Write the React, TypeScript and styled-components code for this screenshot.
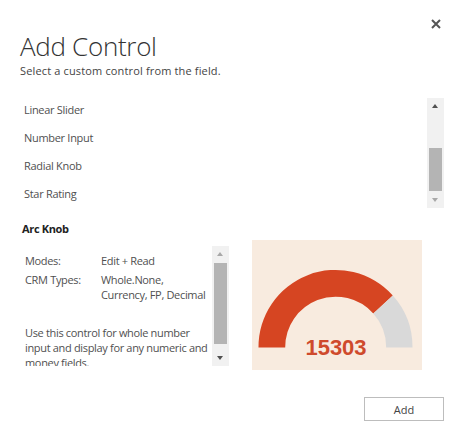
import * as React from 'react';
import styled, { createGlobalStyle } from 'styled-components';

const GlobalStyle = createGlobalStyle`
  html, body {
    margin: 0;
    padding: 0;
    background: #fff;
  }
`;

const Dialog = styled.div`
  width: 455px;
  height: 428px;
  box-sizing: border-box;
  padding: 16px 11px 7px 20px;
  display: flex;
  flex-direction: column;
  overflow: hidden;
  color: #444;
  font-family: 'Open Sans', 'Noto Sans', sans-serif;
  font-size: 11px;
`;

const CloseRow = styled.div`
  display: flex;
  justify-content: flex-end;
  height: 13px;
  padding-right: 2px;
`;

const CloseButton = styled.button`
  width: 12px;
  height: 12px;
  margin-top: 2px;
  padding: 0;
  border: 0;
  background: none;
  color: #555;

  svg {
    display: block;
  }
`;

const Title = styled.h1`
  margin: 0;
  height: 34px;
  font-size: 26px;
  line-height: 34px;
  font-weight: 300;
  letter-spacing: -0.3px;
  color: #333;
`;

const Subtitle = styled.p`
  margin: 0 0 19px;
  height: 16px;
  font-size: 11px;
  line-height: 16px;
  letter-spacing: 0.15px;
  color: #444;
`;

const ListPanel = styled.div`
  display: flex;
  justify-content: space-between;
  height: 110px;
`;

const ControlList = styled.ul`
  list-style: none;
  margin: 0;
  padding: 0 0 0 4px;
`;

const ControlItem = styled.li`
  height: 28px;
  line-height: 24px;
  letter-spacing: -0.3px;
  color: #505050;
`;

const Scrollbar = styled.div<{ $thumbTop: number; $thumbHeight: number }>`
  position: relative;
  width: 17px;
  height: 100%;
  background: #f1f1f1;

  &::after {
    content: '';
    position: absolute;
    left: 2px;
    right: 2px;
    top: ${({ $thumbTop }) => $thumbTop}px;
    height: ${({ $thumbHeight }) => $thumbHeight}px;
    background: #b4b4b4;
  }
`;

const Arrow = styled.span<{ $up?: boolean; $dim?: boolean }>`
  position: absolute;
  left: 5px;
  ${({ $up }) => ($up ? 'top: 6px;' : 'bottom: 6px;')}
  width: 0;
  height: 0;
  border-left: 3.5px solid transparent;
  border-right: 3.5px solid transparent;
  ${({ $up, $dim }) =>
    `${$up ? 'border-bottom' : 'border-top'}: 4px solid ${$dim ? '#a8a8a8' : '#505050'};`}
`;

const SectionTitle = styled.h2`
  margin: 13px 0 0 2px;
  height: 16px;
  font-size: 11px;
  line-height: 16px;
  font-weight: 700;
  letter-spacing: -0.35px;
  color: #222;
`;

const DetailRow = styled.div`
  display: flex;
  margin-top: 9px;
`;

const DetailPanel = styled.div`
  width: 209px;
  height: 120px;
  display: flex;
  justify-content: space-between;
`;

const DetailText = styled.div`
  width: 191px;
  height: 120px;
  padding-left: 5px;
  box-sizing: border-box;
  overflow: hidden;
  line-height: 15px;
  letter-spacing: -0.33px;
  color: #505050;
`;

const InfoGrid = styled.dl`
  display: grid;
  grid-template-columns: 76px 1fr;
  row-gap: 4px;
  margin: 7px 0 0;

  dt,
  dd {
    margin: 0;
    white-space: pre-line;
  }
`;

const Description = styled.p`
  margin: 23px 0 0;
  white-space: nowrap;
`;

const Preview = styled.div`
  width: 170px;
  height: 130px;
  margin: -6px 0 0 23px;
  background: #f8ebdf;

  svg {
    display: block;
  }
`;

const GaugeValue = styled.text`
  font-family: 'Liberation Sans', Arial, sans-serif;
  font-size: 22px;
  font-weight: 700;
  fill: #cf4a2c;
`;

const Footer = styled.div`
  display: flex;
  justify-content: flex-end;
  margin-top: auto;
`;

const AddButton = styled.button`
  width: 80px;
  height: 24px;
  padding: 0;
  background: #fff;
  border: 1px solid #bdbdbd;
  color: #444;
  font-family: inherit;
  font-size: 11px;
`;

const controls = ['Linear Slider', 'Number Input', 'Radial Knob', 'Star Rating'];

const App = () => (
  <>
    <GlobalStyle />
    <Dialog>
      <CloseRow>
        <CloseButton aria-label="Close">
          <svg width="12" height="12" viewBox="0 0 12 12">
            <path d="M2 2l8 8M10 2l-8 8" stroke="currentColor" strokeWidth="2" fill="none" />
          </svg>
        </CloseButton>
      </CloseRow>
      <Title>Add Control</Title>
      <Subtitle>Select a custom control from the field.</Subtitle>
      <ListPanel>
        <ControlList>
          {controls.map((name) => (
            <ControlItem key={name}>{name}</ControlItem>
          ))}
        </ControlList>
        <Scrollbar $thumbTop={50} $thumbHeight={43}>
          <Arrow $up />
          <Arrow $dim />
        </Scrollbar>
      </ListPanel>
      <SectionTitle>Arc Knob</SectionTitle>
      <DetailRow>
        <DetailPanel>
          <DetailText>
            <InfoGrid>
              <dt>Modes:</dt>
              <dd>Edit + Read</dd>
              <dt>CRM Types:</dt>
              <dd>{'Whole.None,\nCurrency, FP, Decimal'}</dd>
            </InfoGrid>
            <Description>
              Use this control for whole number
              <br />
              input and display for any numeric and
              <br />
              money fields.
            </Description>
          </DetailText>
          <Scrollbar $thumbTop={17} $thumbHeight={81}>
            <Arrow $up $dim />
            <Arrow />
          </Scrollbar>
        </DetailPanel>
        <Preview>
          <svg width="170" height="130" viewBox="0 0 170 130">
            <path d="M6.5 107.5A77 77 0 0 1 140.8 55.5L121.3 73.5A50.5 50.5 0 0 0 33.2 107.5Z" fill="#d64522" />
            <path d="M140.8 55.5A77 77 0 0 1 160.5 107.5H134.2A50.5 50.5 0 0 0 121.3 73.5Z" fill="#d9d9d9" />
            <GaugeValue x="84" y="115" textAnchor="middle">15303</GaugeValue>
          </svg>
        </Preview>
      </DetailRow>
      <Footer>
        <AddButton>Add</AddButton>
      </Footer>
    </Dialog>
  </>
);

export default App;
